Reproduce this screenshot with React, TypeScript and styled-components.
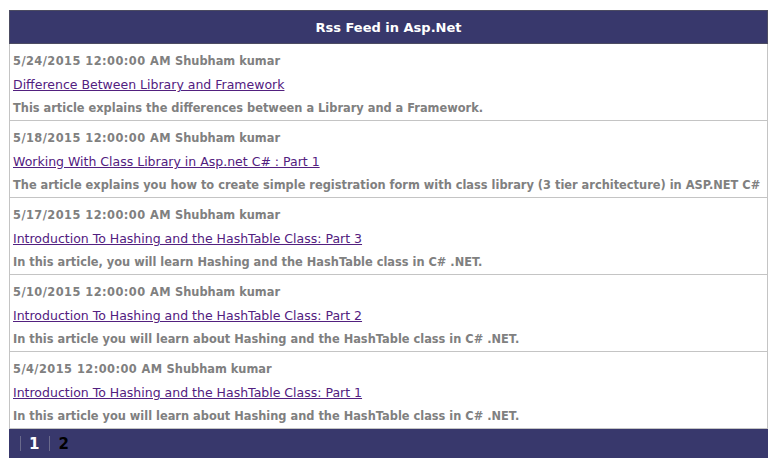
import styled, { createGlobalStyle } from "styled-components";

//# 전역 스타일
const GlobalStyle = createGlobalStyle`
  body {
    margin: 0;
    background: #ffffff;
    font-family: "DejaVu Sans", Verdana, sans-serif;
  }
`;

const NAVY = "#38386c";

interface IFeedItem {
  date: string;
  author: string;
  title: string;
  description: string;
}

const items: IFeedItem[] = [
  {
    date: "5/24/2015 12:00:00 AM",
    author: "Shubham kumar",
    title: "Difference Between Library and Framework",
    description:
      "This article explains the differences between a Library and a Framework.",
  },
  {
    date: "5/18/2015 12:00:00 AM",
    author: "Shubham kumar",
    title: "Working With Class Library in Asp.net C# : Part 1",
    description:
      "The article explains you how to create simple registration form with class library (3 tier architecture) in ASP.NET C#",
  },
  {
    date: "5/17/2015 12:00:00 AM",
    author: "Shubham kumar",
    title: "Introduction To Hashing and the HashTable Class: Part 3",
    description:
      "In this article, you will learn Hashing and the HashTable class in C# .NET.",
  },
  {
    date: "5/10/2015 12:00:00 AM",
    author: "Shubham kumar",
    title: "Introduction To Hashing and the HashTable Class: Part 2",
    description:
      "In this article you will learn about Hashing and the HashTable class in C# .NET.",
  },
  {
    date: "5/4/2015 12:00:00 AM",
    author: "Shubham kumar",
    title: "Introduction To Hashing and the HashTable Class: Part 1",
    description:
      "In this article you will learn about Hashing and the HashTable class in C# .NET.",
  },
];

//# 피드 표
const Page = styled.div`
  padding: 10px 0 0 9px;
`;

const Grid = styled.div`
  width: 759px;
  display: flex;
  flex-direction: column;
`;

const Header = styled.div`
  height: 34px;
  box-sizing: border-box;
  background: ${NAVY};
  border: 1px solid #4c4c62;
  color: #ffffff;
  font-family: "DejaVu Sans", Tahoma, sans-serif;
  font-weight: bold;
  font-size: 13px;
  display: flex;
  align-items: center;
  justify-content: center;
`;

const Row = styled.div`
  display: flex;
  flex-direction: column;
  height: 77px;
  box-sizing: border-box;
  padding: 5.5px 3px 0;
  border-left: 1px solid #c4c4c4;
  border-right: 1px solid #c4c4c4;
  border-bottom: 1px solid #c4c4c4;
`;

const Meta = styled.div`
  line-height: 23.5px;
  font-size: 11.4px;
  font-weight: bold;
  color: #808080;
  white-space: nowrap;
`;

const DateText = styled.span`
  letter-spacing: 0.45px;
`;

const Link = styled.a`
  line-height: 23.5px;
  font-size: 12.5px;
  color: #52207f;
  text-decoration: underline;
  white-space: nowrap;
  width: fit-content;
`;

//# 페이지 번호
const Pager = styled.div`
  height: 29px;
  background: ${NAVY};
  display: flex;
  align-items: center;
  padding-left: 11px;
`;

const PageNo = styled.span<{ $current: boolean }>`
  display: flex;
  align-items: center;
  height: 15px;
  border-left: 1px solid #6a6a8c;
  padding: 0 10px 0 8px;
  font-family: "DejaVu Sans", Tahoma, sans-serif;
  font-weight: bold;
  font-size: 15px;
  color: ${({ $current }) => ($current ? "#ffffff" : "#000000")};
`;

export default function App() {
  return (
    <Page>
      <GlobalStyle />
      <Grid>
        <Header>Rss Feed in Asp.Net</Header>
        {items.map((item) => (
          <Row key={item.title}>
            <Meta>
              <DateText>{item.date}</DateText> {item.author}
            </Meta>
            <Link href="#">{item.title}</Link>
            <Meta>{item.description}</Meta>
          </Row>
        ))}
        <Pager>
          <PageNo $current>1</PageNo>
          <PageNo $current={false}>2</PageNo>
        </Pager>
      </Grid>
    </Page>
  );
}
